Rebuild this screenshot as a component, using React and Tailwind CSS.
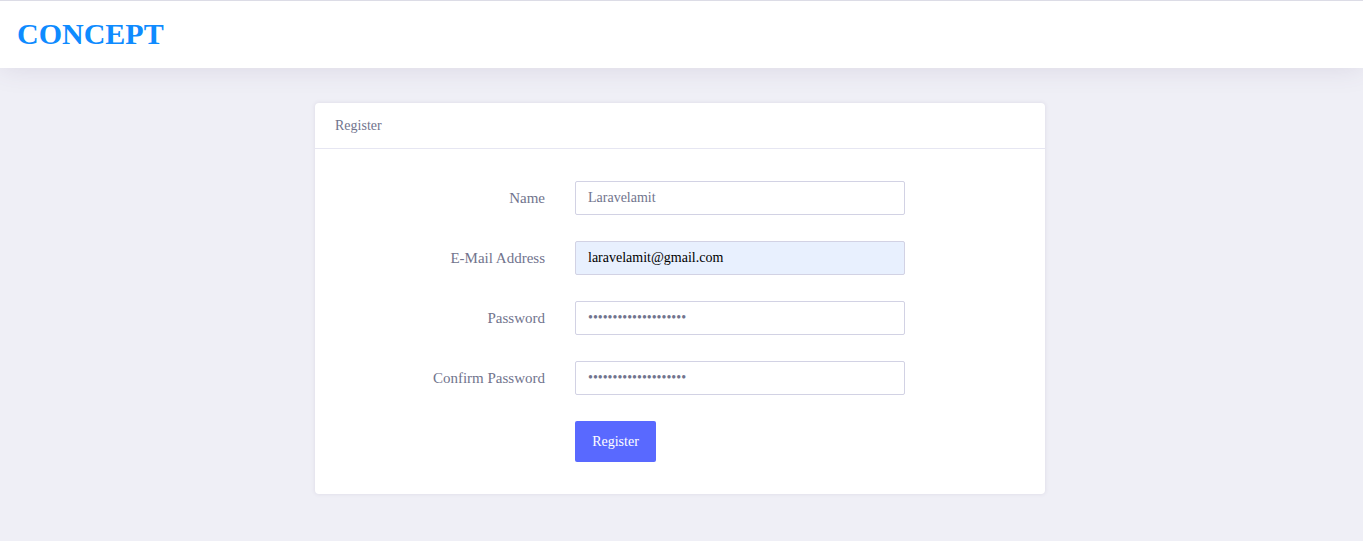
export default function App() {
  const fields = [
    { label: 'Name', type: 'text', value: 'Laravelamit' },
    { label: 'E-Mail Address', type: 'email', value: 'laravelamit@gmail.com', filled: true },
    { label: 'Password', type: 'password', value: 'xxxxxxxxxxxxxxxxxxxx' },
    { label: 'Confirm Password', type: 'password', value: 'xxxxxxxxxxxxxxxxxxxx' },
  ];

  return (
    <div className="min-h-screen bg-[#efeff6] font-['Liberation_Serif',serif]">
      <header className="relative z-10 h-[68px] border-t border-[#dcdce6] bg-white shadow-[0_0_28px_0_rgba(82,63,105,0.13)] flex items-center px-[17px]">
        <a href="#" className="text-[30px] font-bold text-[#0e8bff] leading-none pb-[1px]">
          CONCEPT
        </a>
      </header>

      <main className="flex justify-center pt-[35px] pb-10 pr-[3px]">
        <div className="w-[730px] bg-white rounded-[4px] shadow-[0_0_4px_0_rgba(82,63,105,0.12)]">
          <div className="h-[46px] px-5 flex items-center border-b border-[#e6e6f2] text-[14px] text-[#71748d]">
            Register
          </div>

          <form className="pt-8 pb-8" onSubmit={(e) => e.preventDefault()}>
            <div className="flex flex-col gap-[26px]">
              {fields.map((f) => (
                <div key={f.label} className="flex items-center">
                  <label className="w-[230px] text-right text-[15px] text-[#71748d] pt-[1px]">
                    {f.label}
                  </label>
                  <input
                    type={f.type}
                    defaultValue={f.value}
                    className={`ml-[30px] w-[330px] h-[34px] px-3 rounded-[2px] border border-[#d2d2e4] text-[14px] outline-none ${
                      f.filled ? 'bg-[#e8f0fe] text-black' : 'bg-white text-[#71748d]'
                    }`}
                  />
                </div>
              ))}

              <div className="flex">
                <div className="w-[230px]" />
                <button
                  type="submit"
                  className="ml-[30px] w-[81px] h-[41px] rounded-[2px] bg-[#5969ff] text-white text-[14px]"
                >
                  Register
                </button>
              </div>
            </div>
          </form>
        </div>
      </main>
    </div>
  );
}
